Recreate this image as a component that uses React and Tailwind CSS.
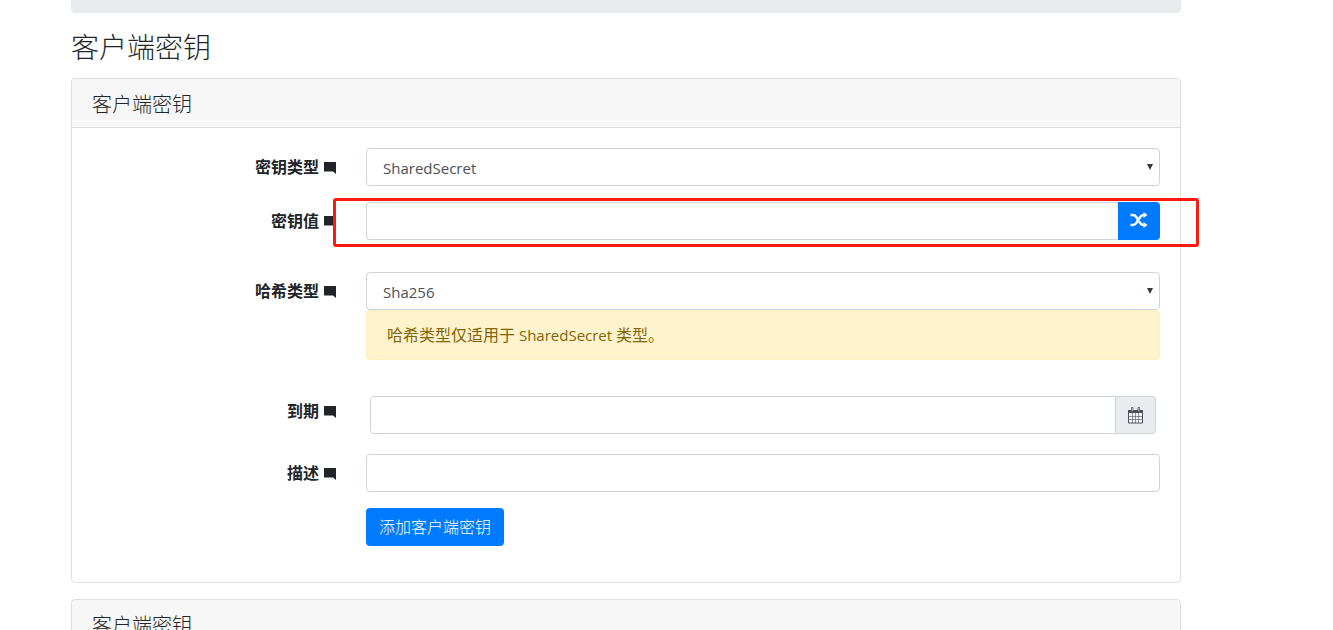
import React, { useState } from 'react';

const CONTROL = 'block w-full h-[38px] rounded border border-[#ced4da] bg-white text-[#495057] text-[15px] outline-none focus:border-[#80bdff]';

function HelpIcon() {
  return (
    <svg className="inline-block align-baseline w-[13px] h-3 ml-1 overflow-visible" viewBox="0 0 13 12" fill="currentColor" aria-hidden="true">
      <path d="M1 1h12v12l-3-2.500H1z" />
    </svg>
  );
}

function ShuffleIcon() {
  return (
    <svg className="w-[18px] h-[18px]" viewBox="0 0 18 18" aria-hidden="true">
      <path d="M.5 4H3c1.600 0 2.400.8 3.300 2l3.900 6c.9 1.300 1.800 2 3.300 2h.8M.5 14H3c1.600 0 2.400-.8 3.300-2l3.900-6c.9-1.300 1.800-2 3.300-2h.8" fill="none" stroke="currentColor" strokeWidth="2.4" />
      <path d="M13.500 1 17.500 4l-4 3zM13.500 11l4 3-4 3z" fill="currentColor" />
    </svg>
  );
}

function CalendarIcon() {
  return (
    <svg className="w-[15px] h-[17px]" viewBox="0 0 15 17" aria-hidden="true">
      <path d="M.5 3.500h14v12.500H.5z" fill="#f5f6f7" stroke="#495057" />
      <path d="M0 3h15v3H0z" fill="#495057" />
      <path d="M1 9.500h13M1 12.500h13M4.500 6v10M7.500 6v10M10.500 6v10" fill="none" stroke="#495057" strokeWidth=".6" />
      <path d="M3.500.5h1.500v4H3.500zM10 .5h1.500v4H10z" fill="#e9ecef" stroke="#495057" strokeWidth=".8" />
    </svg>
  );
}

function FormRow({ id, label, className = '', labelClass = 'pt-[7px]', children }) {
  return (
    <div className={`grid grid-cols-[244fr_794fr] gap-x-[30px] ${className}`}>
      <label htmlFor={id} className={`text-right text-base font-bold leading-6 ${labelClass}`}>
        {label}
        <HelpIcon />
      </label>
      <div>{children}</div>
    </div>
  );
}

function Select({ id, value, onChange, options }) {
  return (
    <div className="relative">
      <select id={id} value={value} onChange={(e) => onChange(e.target.value)} className={`${CONTROL} appearance-none px-4 pt-0.5`}>
        {options.map((option) => (
          <option key={option} value={option}>{option}</option>
        ))}
      </select>
      <svg className="absolute right-[7px] top-4 w-[6px] h-[6px] pointer-events-none" viewBox="0 0 6 6" fill="#343a40" aria-hidden="true">
        <path d="M0 0h6L3 6z" />
      </svg>
    </div>
  );
}

function Card({ title, children }) {
  return (
    <section className="rounded border border-[#dfdfdf] bg-white mb-4">
      <h3 className="rounded-t border-b border-[#dfdfdf] bg-[#f7f7f7] px-5 pt-[14px] pb-[10px] text-xl leading-6 font-light">{title}</h3>
      <div className="px-5 pt-5 pb-9">{children}</div>
    </section>
  );
}

export default function App() {
  const [secretType, setSecretType] = useState('SharedSecret');
  const [hashType, setHashType] = useState('Sha256');
  const [secret, setSecret] = useState('');

  const generate = () => setSecret(crypto.randomUUID());

  return (
    <div className="h-screen overflow-hidden bg-white pl-[71px] pr-[152px] text-[#212529] font-['Open_Sans','Noto_Sans_CJK_SC',sans-serif]">
      <div className="h-[13px] rounded-b bg-[#e9ecef]" />
      <h2 className="mt-[18px] mb-[14px] text-[28px] leading-[33px] font-light">客户端密钥</h2>

      <Card title="客户端密钥">
        <form onSubmit={(e) => e.preventDefault()}>
          <FormRow id="secret-type" label="密钥类型" className="mb-4">
            <Select id="secret-type" value={secretType} onChange={setSecretType} options={['SharedSecret', 'X509Thumbprint', 'X509Name']} />
          </FormRow>

          <FormRow id="secret-value" label="密钥值" className="mb-8">
            <div className="relative flex">
              <input id="secret-value" value={secret} onChange={(e) => setSecret(e.target.value)} className={`${CONTROL} rounded-r-none border-r-0 px-3`} />
              <button type="button" onClick={generate} aria-label="生成" className="flex w-[42px] shrink-0 items-center justify-center rounded-r bg-[#007bff] pb-0.5 text-white">
                <ShuffleIcon />
              </button>
              <div className="absolute -left-[33px] -right-[39px] -top-1 -bottom-[7px] rounded-[3px] border-3 border-[#ff1a0f] pointer-events-none" />
            </div>
          </FormRow>

          <FormRow id="hash-type" label="哈希类型" className="mb-9">
            <Select id="hash-type" value={hashType} onChange={setHashType} options={['Sha256', 'Sha512']} />
            <div className="rounded border border-[#ffeeba] bg-[#fff3cd] px-5 py-3 text-[15px] leading-6 text-[#856404]">
              <span className="text-base leading-6">哈希类型仅适用于</span> SharedSecret <span className="text-base leading-6">类型。</span>
            </div>
          </FormRow>

          <FormRow id="expiration" label="到期" className="mb-5" labelClass="pt-[3px]">
            <div className="flex px-1">
              <input id="expiration" className={`${CONTROL} rounded-r-none px-3`} />
              <button type="button" aria-label="日历" className="flex w-10 shrink-0 items-center justify-center rounded-r border border-l-0 border-[#ced4da] bg-[#e9ecef]">
                <CalendarIcon />
              </button>
            </div>
          </FormRow>

          <FormRow id="description" label="描述" className="mb-4">
            <input id="description" className={`${CONTROL} px-3`} />
          </FormRow>

          <div className="grid grid-cols-[244fr_794fr] gap-x-[30px]">
            <div className="col-start-2">
              <button type="submit" className="block h-[38px] rounded bg-[#007bff] px-[13px] text-base font-light text-white">添加客户端密钥</button>
            </div>
          </div>
        </form>
      </Card>

      <Card title="客户端密钥" />
    </div>
  );
}
